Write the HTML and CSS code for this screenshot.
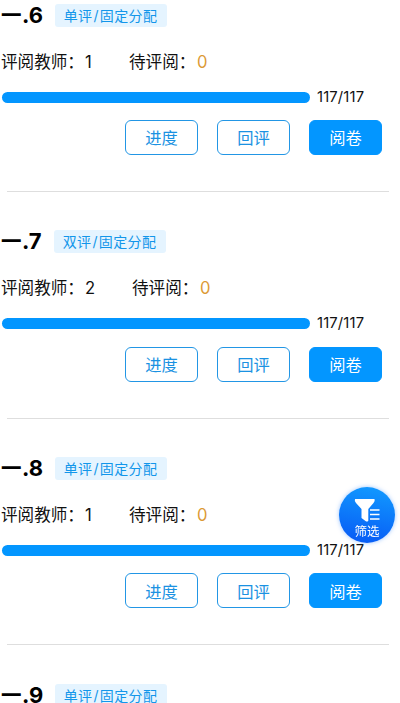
FILE: index.html
```html
<!DOCTYPE html>
<html lang="zh-CN">
<head>
<meta charset="utf-8">
<meta name="viewport" content="width=device-width, initial-scale=1">
<title>阅卷任务</title>
<link rel="stylesheet" href="styles.css">
</head>
<body>
<main class="list">
  <section class="card">
    <header class="head"><h2 class="title"><span class="cn">一</span><span class="num">.6</span></h2><span class="tag">单评<i>/</i>固定分配</span></header>
    <div class="info"><span class="teachers">评阅教师：<b>1</b></span><span>待评阅：<b class="pending">0</b></span></div>
    <div class="progress"><div class="bar"></div><span class="count">117/117</span></div>
    <div class="actions"><button class="btn">进度</button><button class="btn">回评</button><button class="btn primary">阅卷</button></div>
  </section>
  <section class="card">
    <header class="head"><h2 class="title narrow"><span class="cn">一</span><span class="num">.7</span></h2><span class="tag">双评<i>/</i>固定分配</span></header>
    <div class="info"><span class="teachers wide">评阅教师：<b>2</b></span><span>待评阅：<b class="pending">0</b></span></div>
    <div class="progress"><div class="bar"></div><span class="count">117/117</span></div>
    <div class="actions"><button class="btn">进度</button><button class="btn">回评</button><button class="btn primary">阅卷</button></div>
  </section>
  <section class="card">
    <header class="head"><h2 class="title"><span class="cn">一</span><span class="num">.8</span></h2><span class="tag">单评<i>/</i>固定分配</span></header>
    <div class="info"><span class="teachers">评阅教师：<b>1</b></span><span>待评阅：<b class="pending">0</b></span></div>
    <div class="progress"><div class="bar"></div><span class="count">117/117</span></div>
    <div class="actions"><button class="btn">进度</button><button class="btn">回评</button><button class="btn primary">阅卷</button></div>
  </section>
  <section class="card last">
    <header class="head"><h2 class="title"><span class="cn">一</span><span class="num">.9</span></h2><span class="tag">单评<i>/</i>固定分配</span></header>
  </section>
</main>
<button class="filter">
  <svg width="28" height="26" viewBox="0 0 28 26" aria-hidden="true">
    <path d="M2 1H21.5Q22.3 3 20.5 5L15.3 11V22.7Q14 24.3 12.5 23L8.5 20V11L3 5Q1.2 3 2 1Z" fill="#fff"/>
    <path d="M17 12H26.5M17 16.5H26.5M17 21H26.5" stroke="#fff" stroke-width="1.6"/>
  </svg>
  <span>筛选</span>
</button>
</body>
</html>
```
FILE: styles.css
```css
* { box-sizing: border-box; }
html, body { height: 100%; }
body {
  margin: 0;
  overflow: hidden;
  background: #fff;
  color: #111;
  font-family: Inter, "Noto Sans CJK SC", sans-serif;
}
.list { margin-top: -34.8px; }
.card { position: relative; height: 226.6px; padding-top: 38.6px; }
.card.last { height: 61px; }
.card::after {
  content: "";
  position: absolute;
  left: 7px;
  right: 11px;
  bottom: -.2px;
  height: 1px;
  background: #dedede;
}
.card.last::after { display: none; }
.head { display: flex; height: 23px; align-items: center; }
.title {
  display: flex;
  width: 55px;
  margin: 0;
  padding-left: 1px;
  color: #000;
  font-size: 22px;
  font-weight: 700;
  line-height: 23px;
}
.title.narrow { width: 54px; }
.cn { width: 21px; font-size: 20.5px; }
.tag {
  width: 112px;
  height: 23px;
  padding-right: 1px;
  border-radius: 3px;
  background: #e5f4ff;
  color: #1296ea;
  font-size: 14px;
  line-height: 23px;
  letter-spacing: .35px;
  text-align: center;
  white-space: nowrap;
}
.tag i { margin: 0 1px; font-style: normal; }
.info {
  display: flex;
  height: 24px;
  margin-top: 22.8px;
  padding-left: 1px;
  font-size: 16.6px;
  line-height: 24px;
  white-space: nowrap;
}
.info b { margin-left: 1px; font-weight: 400; }
.teachers { width: 128px; }
.teachers.wide { width: 131px; }
.info .pending { margin-left: 1.5px; color: #dc9a35; }
.progress { display: flex; height: 11px; margin-top: 18.2px; padding-left: 2px; align-items: center; }
.bar { width: 308px; height: 11px; border-radius: 6px; background: #0396ff; }
.count { margin-left: 7px; font-size: 14.8px; letter-spacing: .15px; line-height: 19px; }
.actions { display: flex; justify-content: flex-end; gap: 19px; margin-top: 17.2px; padding-right: 18px; }
.btn {
  width: 73px;
  height: 35px;
  padding: 0;
  border: 1.3px solid #2296e5;
  border-radius: 6px;
  background: #fff;
  color: #1b92e2;
  font: 16.3px/32px "Noto Sans CJK SC", sans-serif;
}
.btn.primary { border-color: #0396ff; background: #0396ff; color: #fff; }
.filter {
  position: fixed;
  left: 339px;
  top: 487px;
  display: flex;
  flex-direction: column;
  align-items: center;
  width: 56px;
  height: 56px;
  padding: 11px 0 0;
  border: 0;
  border-radius: 50%;
  background: linear-gradient(190deg, #129cff, #0758f5);
  box-shadow: 0 0 4px #398cff80;
  color: #fff;
  font: 12.5px/14px "Noto Sans CJK SC", sans-serif;
}
.filter svg { flex: none; }
```
